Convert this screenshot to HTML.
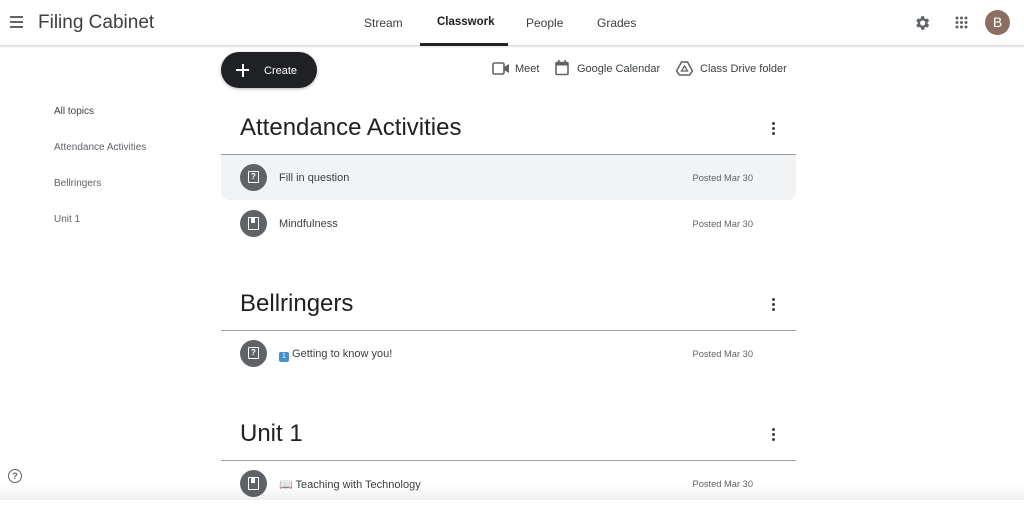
<!DOCTYPE html>
<html><head><style>
*{margin:0;padding:0;box-sizing:border-box}
body{width:1024px;height:500px;overflow:hidden;background:#fff;font-family:"Liberation Sans",sans-serif;color:#3c4043;position:relative}
.hdr{position:absolute;top:0;left:0;width:1024px;height:46px;border-bottom:1px solid #dadce0;box-shadow:0 1px 2px rgba(0,0,0,.12)}
.abs{position:absolute}
.tab{position:absolute;top:16px;font-size:12px;color:#3c4043}
.side{position:absolute;left:54px;font-size:10px;color:#5f6368}
.h{position:absolute;left:240px;font-size:24px;color:#202124}
.line{position:absolute;left:221px;width:575px;height:1px;background:#9aa0a6}
.row{position:absolute;left:221px;width:575px;height:45px}
.ic{position:absolute;left:19px;top:9px;width:27px;height:27px;border-radius:50%;background:#5f6368}
.t{position:absolute;left:58px;top:17px;font-size:11px;color:#3c4043}
.p{position:absolute;right:43px;top:18px;font-size:9.3px;color:#5f6368}
.dots{position:absolute;left:772px;width:4px}
.dots i{display:block;width:3px;height:3px;border-radius:50%;background:#3c4043;margin-bottom:2px}
</style></head><body>
<div class="hdr">
 <div class="abs" style="left:10px;top:16px;width:13px"><div style="height:2px;background:#5f6368;margin-bottom:3px"></div><div style="height:2px;background:#5f6368;margin-bottom:3px"></div><div style="height:2px;background:#5f6368"></div></div>
 <div class="abs" style="left:38px;top:12px;font-size:19px;color:#3c4043">Filing Cabinet</div>
 <div class="tab" style="left:364px">Stream</div>
 <div class="tab" style="left:437px;color:#202124;font-weight:bold;font-size:11.5px">Classwork</div>
 <div class="abs" style="left:420px;top:43px;width:88px;height:3px;background:#202124"></div>
 <div class="tab" style="left:526px">People</div>
 <div class="tab" style="left:597px">Grades</div>
 <svg class="abs" style="left:913px;top:14px" width="18" height="18" viewBox="0 0 24 24"><path fill="#5f6368" d="M19.4 13a7.5 7.5 0 000-2l2.1-1.6-2-3.5-2.5 1a7 7 0 00-1.7-1L14.9 3h-4l-.4 2.9a7 7 0 00-1.7 1l-2.5-1-2 3.5L6.4 11a7.5 7.5 0 000 2l-2.1 1.6 2 3.5 2.5-1a7 7 0 001.7 1l.4 2.9h4l.4-2.9a7 7 0 001.7-1l2.5 1 2-3.5zM12.9 15.5a3.5 3.5 0 110-7 3.5 3.5 0 010 7z"/><circle cx="12.9" cy="12" r="2" fill="#fff"/></svg>
 <svg class="abs" style="left:955px;top:16px" width="13" height="13" viewBox="0 0 13 13" fill="#5f6368"><circle cx="2" cy="2" r="1.5"/><circle cx="6.5" cy="2" r="1.5"/><circle cx="11" cy="2" r="1.5"/><circle cx="2" cy="6.5" r="1.5"/><circle cx="6.5" cy="6.5" r="1.5"/><circle cx="11" cy="6.5" r="1.5"/><circle cx="2" cy="11" r="1.5"/><circle cx="6.5" cy="11" r="1.5"/><circle cx="11" cy="11" r="1.5"/></svg>
 <div class="abs" style="left:985px;top:10px;width:25px;height:25px;border-radius:50%;background:#8d6e63;color:#fff;font-size:14px;text-align:center;line-height:25px">B</div>
</div>
<div class="abs" style="left:221px;top:52px;width:96px;height:36px;border-radius:18px;background:#202124;box-shadow:0 1px 3px rgba(0,0,0,.3)">
 <div class="abs" style="left:15px;top:17px;width:13px;height:2px;background:#fff"></div>
 <div class="abs" style="left:20.5px;top:11.5px;width:2px;height:13px;background:#fff"></div>
 <div class="abs" style="left:43px;top:13px;color:#fff;font-size:11px">Create</div>
</div>
<svg class="abs" style="left:492px;top:62px" width="18" height="13" viewBox="0 0 18 13"><rect x="1" y="1" width="11" height="11" rx="1.5" fill="none" stroke="#5f6368" stroke-width="1.6"/><path d="M12 5l5-3v9l-5-3z" fill="#5f6368"/></svg>
<div class="abs" style="left:515px;top:63px;font-size:11px">Meet</div>
<svg class="abs" style="left:555px;top:60px" width="14" height="16" viewBox="0 0 14 16"><rect x="1" y="2.5" width="12" height="12" rx="1" fill="none" stroke="#5f6368" stroke-width="1.6"/><rect x="1" y="2.5" width="12" height="3" fill="#5f6368"/><rect x="3" y="0" width="1.6" height="3" fill="#5f6368"/><rect x="9.4" y="0" width="1.6" height="3" fill="#5f6368"/></svg>
<div class="abs" style="left:577px;top:63px;font-size:11px">Google Calendar</div>
<svg class="abs" style="left:676px;top:61px" width="17" height="15" viewBox="0 0 17 15"><path d="M5.5 1h6l5 9-3 4h-10l-3-4z" fill="none" stroke="#5f6368" stroke-width="1.5"/><path d="M8.5 5l3 5h-6z" fill="none" stroke="#5f6368" stroke-width="1.3"/></svg>
<div class="abs" style="left:700px;top:63px;font-size:11px">Class Drive folder</div>

<div class="side" style="top:106px;color:#3c4043">All topics</div>
<div class="side" style="top:142px">Attendance Activities</div>
<div class="side" style="top:178px">Bellringers</div>
<div class="side" style="top:214px">Unit 1</div>

<div class="h" style="top:114px">Attendance Activities</div>
<div class="dots" style="top:122px"><i></i><i></i><i></i></div>
<div class="line" style="top:154px"></div>
<div class="row" style="top:155px;background:#f1f3f4;border-radius:0 0 8px 8px"><div class="ic"><div style="position:absolute;left:8px;top:7px;width:11px;height:12px;border:1.6px solid #fff;border-radius:1px;color:#fff;font-size:8px;line-height:9px;text-align:center;font-weight:bold">?</div></div><div class="t">Fill in question</div><div class="p">Posted Mar 30</div></div>
<div class="row" style="top:201px"><div class="ic"><div style="position:absolute;left:8px;top:7px;width:11px;height:13px;border:1.6px solid #fff;border-radius:1px"><div style="position:absolute;left:2px;top:0;width:4px;height:5px;background:#fff"></div></div></div><div class="t">Mindfulness</div><div class="p">Posted Mar 30</div></div>

<div class="h" style="top:290px">Bellringers</div>
<div class="dots" style="top:298px"><i></i><i></i><i></i></div>
<div class="line" style="top:330px"></div>
<div class="row" style="top:331px"><div class="ic"><div style="position:absolute;left:8px;top:7px;width:11px;height:12px;border:1.6px solid #fff;border-radius:1px;color:#fff;font-size:8px;line-height:9px;text-align:center;font-weight:bold">?</div></div><div class="t"><span style="display:inline-block;width:10px;height:10px;background:#4a90c8;border-radius:2px;color:#fff;font-size:7px;text-align:center;line-height:10px;vertical-align:-1px">1</span> Getting to know you!</div><div class="p">Posted Mar 30</div></div>

<div class="h" style="top:420px">Unit 1</div>
<div class="dots" style="top:428px"><i></i><i></i><i></i></div>
<div class="line" style="top:460px"></div>
<div class="row" style="top:461px"><div class="ic"><div style="position:absolute;left:8px;top:7px;width:11px;height:13px;border:1.6px solid #fff;border-radius:1px"><div style="position:absolute;left:2px;top:0;width:4px;height:5px;background:#fff"></div></div></div><div class="t">📖 Teaching with Technology</div><div class="p">Posted Mar 30</div></div>

<div class="abs" style="left:0;top:485px;width:1024px;height:15px;background:linear-gradient(rgba(255,255,255,0),rgba(0,0,0,.06))"></div>
<div class="abs" style="left:8px;top:469px;width:14px;height:14px;border:1.4px solid #5f6368;border-radius:50%;font-size:9px;text-align:center;line-height:12px;color:#5f6368;font-weight:bold">?</div>
</body></html>
